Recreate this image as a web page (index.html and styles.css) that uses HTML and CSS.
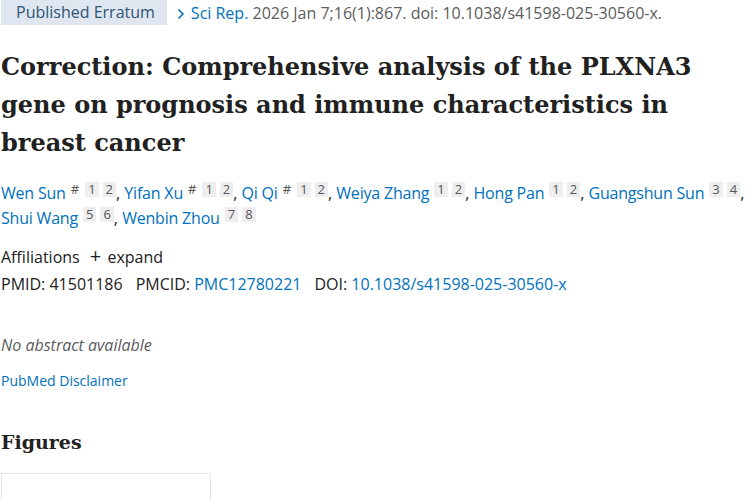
FILE: index.html
```html
<!DOCTYPE html>
<html>
<head>
<meta charset="utf-8">
<link rel="stylesheet" href="styles.css">
</head>
<body>
<div class="page">
  <div class="top">
    <span class="badge">Published Erratum</span>
    <span class="cite"><a class="journal" href="#"><svg class="chev" width="8" height="12" viewBox="0 0 8 12"><polyline points="1.5,1.5 6,6 1.5,10.5" fill="none" stroke="#0071bc" stroke-width="1.6"/></svg>Sci Rep.</a> 2026 Jan 7;16(1):867. doi: 10.1038/s41598-025-30560-x.</span>
  </div>
  <h1 class="title">Correction: Comprehensive analysis of the PLXNA3 gene on prognosis and immune characteristics in breast cancer</h1>
  <div class="authors">
    <a href="#">Wen Sun</a><span class="sups"><span class="hash">#</span><span class="sup">1</span><span class="sup">2</span></span>, <a href="#">Yifan Xu</a><span class="sups"><span class="hash">#</span><span class="sup">1</span><span class="sup">2</span></span>, <a href="#">Qi Qi</a><span class="sups"><span class="hash">#</span><span class="sup">1</span><span class="sup">2</span></span>, <a href="#">Weiya Zhang</a><span class="sups"><span class="sup">1</span><span class="sup">2</span></span>, <a href="#">Hong Pan</a><span class="sups"><span class="sup">1</span><span class="sup">2</span></span>, <a href="#">Guangshun Sun</a><span class="sups"><span class="sup">3</span><span class="sup">4</span></span>,
    <a href="#">Shui Wang</a><span class="sups"><span class="sup">5</span><span class="sup">6</span></span>, <a href="#">Wenbin Zhou</a><span class="sups"><span class="sup">7</span><span class="sup">8</span></span>
  </div>
  <div class="affil">Affiliations <span class="plus">+</span> expand</div>
  <div class="ids">
    <span class="id">PMID: 41501186</span>
    <span class="id">PMCID: <a href="#">PMC12780221</a></span>
    <span class="id">DOI: <a href="#">10.1038/s41598-025-30560-x</a></span>
  </div>
  <p class="noabs">No abstract available</p>
  <a class="disclaimer" href="#">PubMed Disclaimer</a>
  <h2 class="figures">Figures</h2>
  <div class="figbox"></div>
</div>
</body>
</html>
```

FILE: styles.css
```css
html, body {
  margin: 0;
  padding: 0;
  background: #fff;
}
body {
  font-family: "Open Sans", "Noto Sans", sans-serif;
  color: #212121;
  font-size: 16px;
}
a {
  color: #0071bc;
  text-decoration: none;
}
.page {
  padding: 0 0 0 1px;
}
.top {
  display: flex;
  align-items: center;
  height: 25px;
  gap: 8px;
}
.badge {
  background: #dfe6ef;
  color: #2f5378;
  height: 25px;
  line-height: 25px;
  padding: 0 12px 0 15px;
  font-size: 16px;
}
.cite {
  color: #5c5c5c;
  font-size: 16px;
}
.chev {
  display: inline-block;
  margin: 0 6px 0 2px;
  vertical-align: -1px;
}
.title {
  font-family: "DejaVu Serif", serif;
  font-weight: bold;
  font-size: 24px;
  line-height: 38px;
  margin: 23px 0 19px;
  color: #212121;
}
.authors {
  line-height: 25px;
  color: #212121;
}
.authors a {
  letter-spacing: -0.2px;
}
.sups {
  display: inline-flex;
  gap: 4px;
  margin-left: 5px;
  vertical-align: 5px;
  font-size: 13px;
  line-height: 15px;
}
.sup {
  background: #eee;
  color: #555;
  padding: 0 3px;
}
.hash {
  color: #555;
  padding: 0 2px 0 0;
}
.affil {
  margin-top: 12px;
  line-height: 25px;
}
.plus {
  font-size: 20px;
  margin: 0 2px 0 6px;
}
.ids {
  display: flex;
  gap: 13px;
  line-height: 28px;
}
.noabs {
  font-style: italic;
  color: #5c5c5c;
  margin: 35px 0 0;
  line-height: 24px;
}
.disclaimer {
  display: block;
  font-size: 14px;
  margin-top: 14px;
  line-height: 20px;
}
.figures {
  font-family: "DejaVu Serif", serif;
  font-weight: bold;
  font-size: 19px;
  margin: 37px 0 17px;
  line-height: 28px;
}
.figbox {
  width: 208px;
  height: 40px;
  border: 1px solid #e4e4e4;
}
```
